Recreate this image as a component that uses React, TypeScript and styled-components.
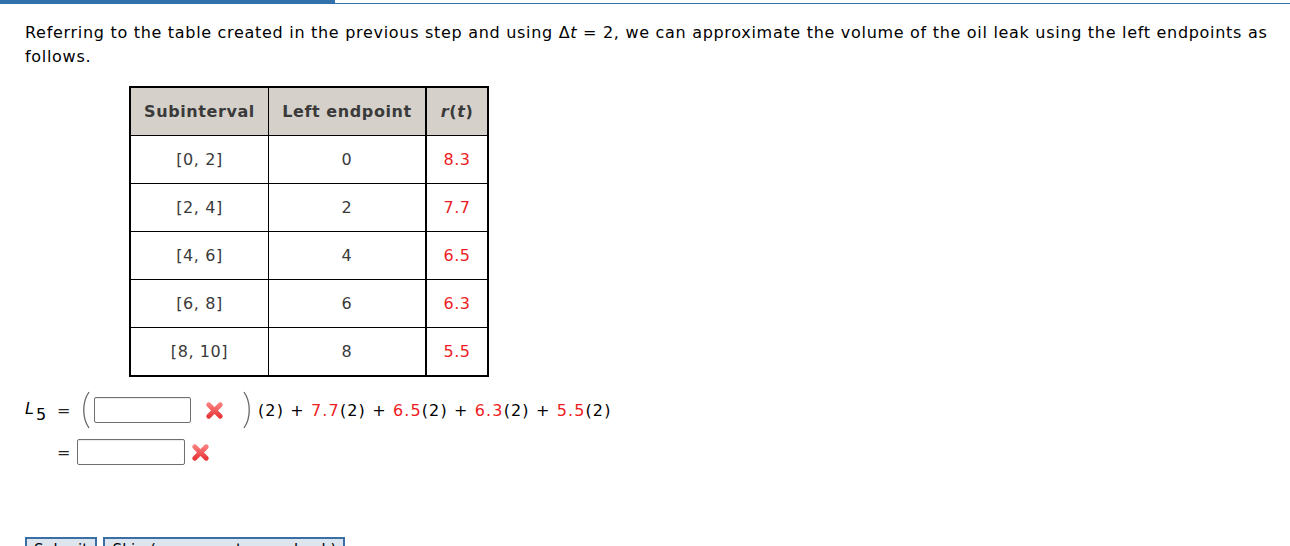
import React from "react";
import styled, { createGlobalStyle } from "styled-components";

const Global = createGlobalStyle`
  html, body { margin: 0; padding: 0; background: #fff; }
  body { font-family: "DejaVu Sans", Verdana, sans-serif; color: #000; overflow: hidden; letter-spacing: 0.7px; }
`;

const Page = styled.div`
  width: 1290px;
  height: 546px;
  overflow: hidden;
  position: relative;
`;

const TopBar = styled.div`
  display: flex;
  align-items: flex-end;
  height: 4px;
`;

const TopBarFill = styled.div`
  width: 335px;
  height: 4px;
  background: #3270ab;
`;

const TopBarLine = styled.div`
  flex: 1;
  height: 1px;
  background: #3270ab;
`;

const Content = styled.div`
  padding: 17px 12px 0 25px;
`;

const Para = styled.p`
  margin: 0;
  font-size: 16px;
  line-height: 24px;
`;

const Var = styled.i`
  font-style: italic;
`;

const Table = styled.table`
  margin: 17px 0 0 104px;
  border-collapse: collapse;
  border: 2px solid #000;
  font-size: 16px;
  color: #3a3a3a;
  letter-spacing: 0.6px;
`;

const Th = styled.th<{ $w: number; $thick?: boolean }>`
  background: #d5d1ca;
  height: 47px;
  width: ${(p) => p.$w}px;
  padding: 0;
  font-weight: bold;
  text-align: center;
  border-right: ${(p) => (p.$thick ? 2 : 1)}px solid #000;
  border-bottom: 1px solid #000;
  color: #3a3a3a;
`;

const Td = styled.td<{ $red?: boolean; $thick?: boolean }>`
  height: 47px;
  padding: 0;
  text-align: center;
  border-right: ${(p) => (p.$thick ? 2 : 1)}px solid #000;
  border-bottom: 1px solid #000;
  color: ${(p) => (p.$red ? "#ee1c25" : "#3a3a3a")};
`;

const EqBlock = styled.div`
  margin-top: 16px;
  display: grid;
  grid-template-columns: 24px auto;
  row-gap: 8px;
  font-size: 16px;
  align-items: center;
`;

const Lhs = styled.span`
  font-style: italic;
  font-size: 16px;
  letter-spacing: 0;
  position: relative;
  top: -2px;
`;

const Sub = styled.span`
  font-style: normal;
  font-size: 16px;
  position: relative;
  top: 6px;
  margin-left: 2px;
`;

const EqRow = styled.div`
  display: flex;
  align-items: center;
  height: 34px;
`;

const Eq = styled.span`
  width: 20px;
  margin-left: 8px;
  text-align: left;
  color: #222;
`;

const Paren = styled.svg`
  width: 14px;
  height: 38px;
  flex: none;
`;

const Input = styled.div<{ $w: number }>`
  width: ${(p) => p.$w}px;
  height: 26px;
  border: 1px solid #6f6f6f;
  border-radius: 2px;
  box-sizing: border-box;
  box-shadow: inset 0 1px 1px rgba(0,0,0,0.08);
  background: #fff;
  flex: none;
`;

const XMark = styled.svg`
  width: 21px;
  height: 21px;
  flex: none;
`;

const Spacer = styled.span<{ $w: number }>`
  width: ${(p) => p.$w}px;
  flex: none;
`;

const Expr = styled.span`
  white-space: pre;
  color: #000;
  letter-spacing: 1.13px;
  margin-left: 4px;
`;

const Red = styled.span`
  color: #ee1c25;
`;

const Buttons = styled.div`
  position: absolute;
  left: 25px;
  top: 537px;
  display: flex;
  gap: 6px;
`;

const Btn = styled.button`
  font-family: "DejaVu Sans", Verdana, sans-serif;
  font-size: 15px;
  letter-spacing: 0.2px;
  height: 28px;
  padding: 2px 7px 0;
  border: 2px solid #3a6ea5;
  background: #dde6ef;
  color: #000;
  display: flex;
  align-items: flex-start;
`;

const Cross = () => (
  <XMark viewBox="0 0 20 20">
    <defs>
      <linearGradient id="xg" x1="0" y1="0" x2="0" y2="1">
        <stop offset="0" stopColor="#fb7b7b" />
        <stop offset="1" stopColor="#e8393c" />
      </linearGradient>
    </defs>
    <path d="M4.5 4.5 L15.5 15.5 M15.5 4.5 L4.5 15.5" stroke="url(#xg)" strokeWidth="4.6" strokeLinecap="round" />
  </XMark>
);

const LeftParen = () => (
  <Paren viewBox="0 0 14 38">
    <path d="M10 1 C3 11 3 27 10 37" stroke="#666" strokeWidth="1.3" fill="none" />
  </Paren>
);

const RightParen = () => (
  <Paren viewBox="0 0 14 38">
    <path d="M4 1 C11 11 11 27 4 37" stroke="#666" strokeWidth="1.3" fill="none" />
  </Paren>
);

const rows = [
  ["[0, 2]", "0", "8.3"],
  ["[2, 4]", "2", "7.7"],
  ["[4, 6]", "4", "6.5"],
  ["[6, 8]", "6", "6.3"],
  ["[8, 10]", "8", "5.5"],
];

export default function App() {
  return (
    <Page>
      <Global />
      <TopBar>
        <TopBarFill />
        <TopBarLine />
      </TopBar>
      <Content>
        <Para>
          Referring to the table created in the previous step and using Δ<Var>t</Var> = 2, we can approximate the volume of the oil leak using the left endpoints as follows.
        </Para>
        <Table>
          <thead>
            <tr>
              <Th $w={137}>Subinterval</Th>
              <Th $w={156} $thick>Left endpoint</Th>
              <Th $w={60}><i>r</i>(<i>t</i>)</Th>
            </tr>
          </thead>
          <tbody>
            {rows.map((r) => (
              <tr key={r[0]}>
                <Td>{r[0]}</Td>
                <Td $thick>{r[1]}</Td>
                <Td $red>{r[2]}</Td>
              </tr>
            ))}
          </tbody>
        </Table>
        <EqBlock>
          <Lhs>L<Sub>5</Sub></Lhs>
          <EqRow>
            <Eq>=</Eq>
            <Spacer $w={2} />
            <LeftParen />
            <Spacer $w={1} />
            <Input $w={97} />
            <Spacer $w={13} />
            <Cross />
            <Spacer $w={15} />
            <RightParen />
            <Expr>(2) + <Red>7.7</Red>(2) + <Red>6.5</Red>(2) + <Red>6.3</Red>(2) + <Red>5.5</Red>(2)</Expr>
          </EqRow>
          <span />
          <EqRow>
            <Eq>=</Eq>
            <Input $w={108} />
            <Spacer $w={5} />
            <Cross />
          </EqRow>
        </EqBlock>
      </Content>
      <Buttons>
        <Btn>Submit</Btn>
        <Btn>Skip (you cannot come back)</Btn>
      </Buttons>
    </Page>
  );
}
